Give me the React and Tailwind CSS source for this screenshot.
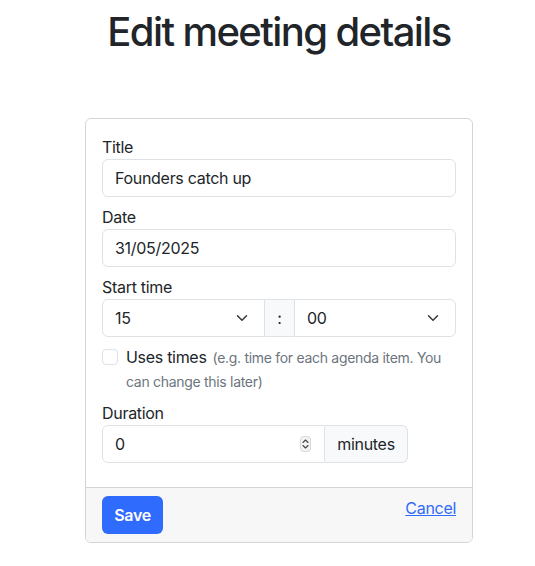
import React from "react";

const Chevron = () => (
  <svg width="16" height="12" viewBox="0 0 16 16" fill="none" className="shrink-0">
    <path d="m2 5 6 6 6-6" stroke="#343a40" strokeWidth="2" strokeLinecap="round" strokeLinejoin="round" />
  </svg>
);

export default function App() {
  return (
    <div className="min-h-[566px] bg-white text-[#212529] pl-[23px]" style={{ fontFamily: "Inter, 'Liberation Sans', sans-serif" }}>
      <h1 className="text-center text-[40px] leading-[48px] font-medium pt-[8px] tracking-[-1.6px]">Edit meeting details</h1>
      <div className="w-[388px] mx-auto mt-[62px] border border-[#d5d5d6] rounded-[6px] overflow-hidden tracking-[-0.3px]">
        <div className="px-4 pt-4 pb-4 text-[16px] leading-[24px]">
          <div className="mb-2">
            <div>Title</div>
            <div className="h-[38px] border border-[#dee2e6] rounded-[6px] px-3 flex items-center">Founders catch up</div>
          </div>
          <div className="mb-2">
            <div>Date</div>
            <div className="h-[38px] border border-[#dee2e6] rounded-[6px] px-3 flex items-center">31/05/2025</div>
          </div>
          <div className="mb-2">
            <div>Start time</div>
            <div className="h-[38px] flex">
              <div className="w-[163px] border border-[#dee2e6] rounded-l-[6px] pl-3 pr-[14px] flex items-center justify-between">
                <span>15</span>
                <Chevron />
              </div>
              <div className="w-[29px] border-y border-[#dee2e6] bg-[#f8f9fa] flex items-center justify-center">:</div>
              <div className="flex-1 border border-[#dee2e6] rounded-r-[6px] pl-3 pr-[14px] flex items-center justify-between">
                <span>00</span>
                <Chevron />
              </div>
            </div>
          </div>
          <div className="mb-2 flex">
            <div className="w-6 shrink-0 pt-1">
              <div className="w-4 h-4 border border-[#dee2e6] rounded-[4px] bg-white"></div>
            </div>
            <div className="leading-[24px]">
              Uses times
              <span className="text-[14px] leading-[16px] text-[#6c757d] ml-[6px]">(e.g. time for each agenda item. You can change this later)</span>
            </div>
          </div>
          <div className="mb-2">
            <div>Duration</div>
            <div className="h-[38px] flex w-[306px]">
              <div className="flex-1 border border-[#dee2e6] rounded-l-[6px] pl-3 pr-[13px] flex items-center justify-between">
                <span>0</span>
                <svg width="11" height="16" viewBox="0 0 11 16" fill="none">
                  <rect x="0.5" y="0.5" width="10" height="15" rx="3" fill="#f2f2f2" stroke="#d8d8d8" />
                  <path d="M3 6.5 5.5 4 8 6.5M3 9.5 5.5 12 8 9.5" stroke="#444" strokeWidth="1.1" strokeLinecap="round" strokeLinejoin="round" />
                </svg>
              </div>
              <div className="w-[83px] border border-l-0 border-[#dee2e6] rounded-r-[6px] bg-[#f8f9fa] flex items-center justify-center">minutes</div>
            </div>
          </div>
        </div>
        <div className="border-t border-[#d5d5d6] bg-[#f7f7f7] px-4 py-2 flex justify-between items-start">
          <button className="h-[38px] w-[61px] rounded-[6px] bg-[#2f6bfd] text-white font-semibold text-[16px]">Save</button>
          <a href="#" className="text-[#2f6bfd] underline text-[16px] leading-[24px]">Cancel</a>
        </div>
      </div>
    </div>
  );
}
